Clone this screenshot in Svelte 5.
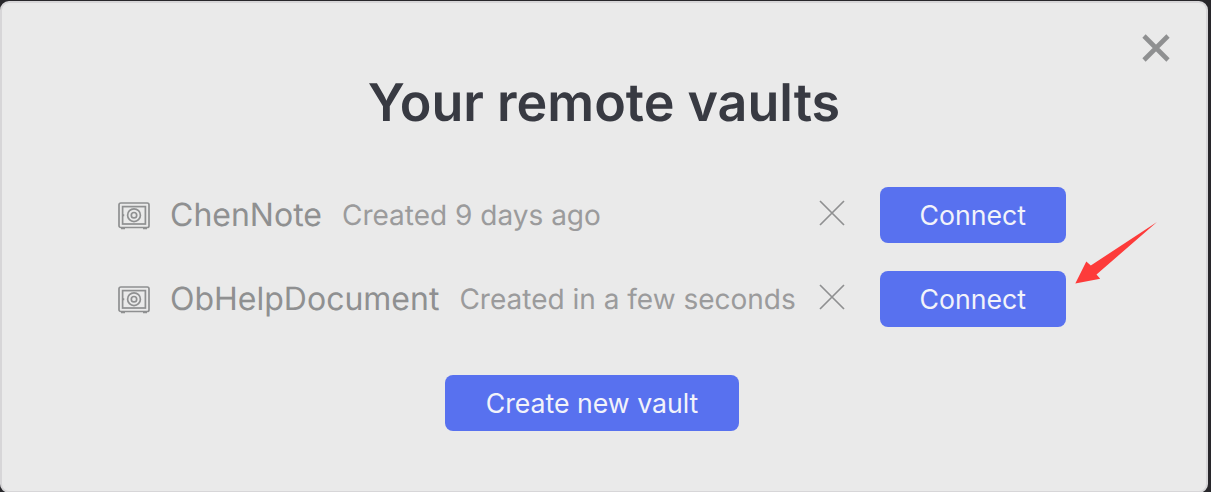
<script lang="ts">
  type Vault = {
    name: string;
    created: string;
  };

  let vaults: Vault[] = $state([
    { name: "ChenNote", created: "Created 9 days ago" },
    { name: "ObHelpDocument", created: "Created in a few seconds" },
  ]);
</script>

<div class="modal" role="dialog" aria-labelledby="vaults-title">
  <button class="modal-close" aria-label="Close">
    <svg width="28" height="28" viewBox="0 0 28 28">
      <path d="M2 2 26 26M26 2 2 26" />
    </svg>
  </button>

  <h2 id="vaults-title">Your remote vaults</h2>

  <div class="modal-content">
    <div class="vault-list">
      {#each vaults as vault (vault.name)}
        <div class="vault-item">
          <svg class="vault-icon" width="32" height="28" viewBox="0 0 32 28">
            <rect x="1" y="1" width="30" height="24.5" rx="1.8" />
            <rect x="4.6" y="4.6" width="22.8" height="17.4" />
            <circle cx="16" cy="13.2" r="6.4" />
            <circle cx="16" cy="13.2" r="2.7" />
            <path d="M5.4 12.2v2M3 26.4h4M25 26.4h4" />
          </svg>
          <span class="vault-name">{vault.name}</span>
          <span class="vault-created">{vault.created}</span>
          <button class="vault-delete" aria-label="Delete {vault.name}">
            <svg width="26" height="26" viewBox="0 0 26 26">
              <path d="M1 1 25 25M25 1 1 25" />
            </svg>
          </button>
          <button class="cta">Connect</button>
        </div>
      {/each}
    </div>
    <button class="cta cta-create">Create new vault</button>
  </div>

  <svg class="arrow" width="82" height="62" viewBox="0 0 82 62">
    <path d="M82 0 15.8 43.5 11.3 39.5 0.3 61.5 25.2 56.8 21.5 52.5z" />
  </svg>
</div>

<style>
  :global(body) {
    overflow: hidden;
    background: #28272b;
  }

  .modal {
    position: relative;
    box-sizing: border-box;
    width: 1208px;
    height: 492px;
    margin-top: 1px;
    padding: 68px 0 0;
    border: 2px solid #d7d6d8;
    border-radius: 9px;
    background: #eaeaea;
    font-family: Inter, sans-serif;
    text-rendering: geometricPrecision;
    color: #8f9091;
  }

  h2 {
    margin: 0;
    font-size: 52px;
    font-weight: 600;
    line-height: 64px;
    text-align: center;
    color: #383a42;
  }

  button {
    padding: 0;
    border: none;
    background: none;
    font: inherit;
    color: inherit;
    cursor: pointer;
  }

  svg {
    display: block;
    fill: none;
    stroke: currentColor;
  }

  .modal-close {
    position: absolute;
    top: 31px;
    right: 36px;
  }

  .modal-close svg {
    stroke-width: 4.6;
  }

  .modal-content {
    display: flex;
    flex-direction: column;
    align-items: center;
    gap: 48px;
    width: 948px;
    margin: 52px 0 0 116px;
  }

  .vault-list {
    display: flex;
    flex-direction: column;
    gap: 28px;
    width: 100%;
  }

  .vault-item {
    display: flex;
    align-items: center;
    height: 56px;
    white-space: nowrap;
  }

  .vault-icon {
    margin-top: 2px;
    stroke-width: 1.7;
  }

  .vault-name {
    margin: -2px 0 0 20px;
    font-size: 32px;
  }

  .vault-created {
    margin-left: 20px;
    font-size: 28px;
    color: #9b9b9c;
  }

  .vault-delete {
    margin: -4px 35px 0 auto;
  }

  .vault-delete svg {
    stroke-width: 1.7;
  }

  .cta {
    height: 56px;
    padding: 0 40px;
    border-radius: 8px;
    background: #5871ef;
    font-size: 26.667px;
    color: #f2f3fa;
  }

  .cta-create {
    width: 294px;
    white-space: nowrap;
  }

  .arrow {
    position: absolute;
    top: 219px;
    left: 1073px;
    fill: #fd3b3a;
    stroke: none;
  }
</style>
